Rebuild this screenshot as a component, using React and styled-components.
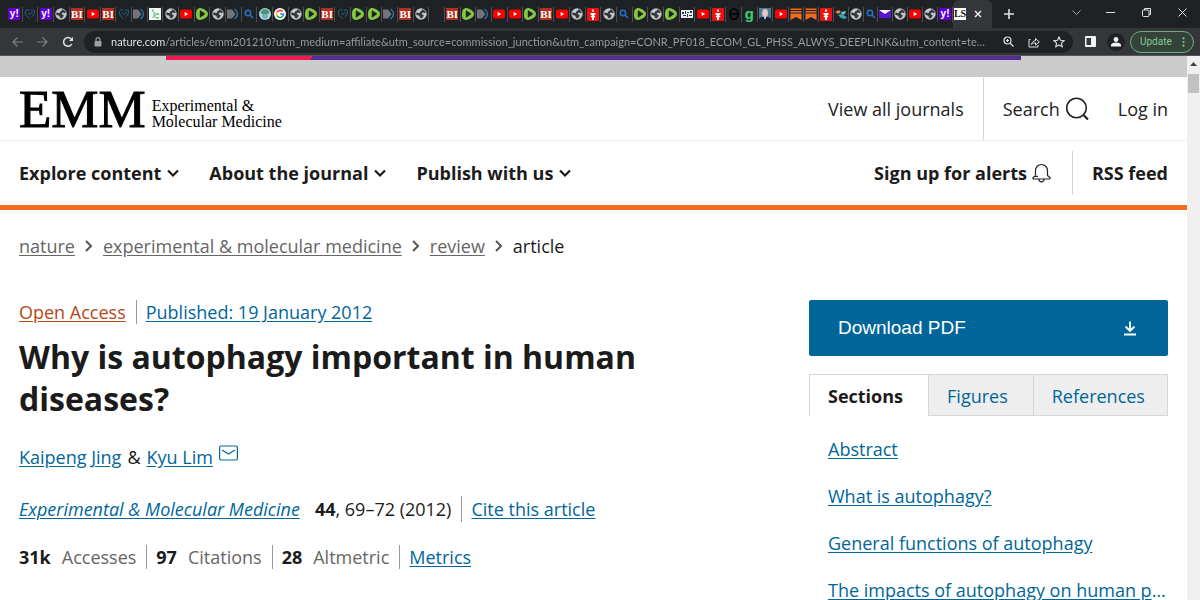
import React from "react";
import styled, { createGlobalStyle } from "styled-components";

const GlobalStyle = createGlobalStyle`
  * {
    box-sizing: border-box;
  }

  body {
    margin: 0;
    background: #ffffff;
    color: #1b1b1b;
    font-family: "Open Sans", "Noto Sans", sans-serif;
    font-size: 18px;
    line-height: 28px;
  }

  button, input {
    font-family: inherit;
    font-size: inherit;
    line-height: inherit;
    color: inherit;
    margin: 0;
    padding: 0;
    border: 0;
    background: none;
  }

  ul, ol {
    list-style: none;
    margin: 0;
    padding: 0;
  }

  svg {
    display: block;
    flex-shrink: 0;
  }
`;

const Window = styled.div`
  display: flex;
  flex-direction: column;
  height: 100vh;
  overflow: hidden;
`;

/* ---------- browser ---------- */

const TabStrip = styled.div`
  display: flex;
  height: 28px;
  padding-left: 7px;
  background: #202124;
  color: #dee1e6;
`;

const Tabs = styled.ul`
  display: flex;
  flex: 1;
  align-items: center;
  min-width: 0;
`;

const Tab = styled.li`
  display: flex;
  flex: ${(props) => (props.$tight ? 19 : 20)} 1 0;
  align-items: center;
  justify-content: center;
  min-width: 0;
  height: 15px;
  border-right: 1px solid #4b4d51;
`;

const ActiveTab = styled.div`
  display: flex;
  align-items: center;
  gap: 8px;
  width: 39px;
  padding-left: 1px;
  border-radius: 6px 6px 0 0;
  background: #35363a;
`;

const WindowButton = styled.button`
  display: flex;
  align-items: center;
  justify-content: center;
  width: ${(props) => props.$width || 36}px;
  color: ${(props) => props.$color || "#dee1e6"};
`;

const WindowButtons = styled.div`
  display: flex;
  height: 25px;
  margin-left: 34px;
`;

const Letter = styled.span`
  display: flex;
  align-items: center;
  justify-content: center;
  width: 12px;
  height: 12px;
  background: ${(props) => props.$bg || "transparent"};
  color: ${(props) => props.$color || "#ffffff"};
  font-family: ${(props) =>
    props.$serif
      ? '"Liberation Serif", serif'
      : '"Liberation Sans", sans-serif'};
  font-size: ${(props) => props.$size || 11}px;
  font-weight: bold;
  line-height: 12px;
`;

const Toolbar = styled.div`
  display: flex;
  align-items: center;
  height: 28px;
  padding: 0 6px 0 5px;
  border-bottom: 1px solid #55565a;
  background: #35363a;
  color: #dee1e6;
`;

const ToolButton = styled.button`
  display: flex;
  align-items: center;
  justify-content: center;
  width: 25px;
  height: 22px;
  color: ${(props) => (props.$dim ? "#7d8084" : "#dee1e6")};
`;

const AddressBar = styled.div`
  display: flex;
  flex: 1;
  align-items: center;
  min-width: 0;
  height: 22px;
  margin: 0 5px 0 4px;
  padding: 0 2px 0 10px;
  border-radius: 11px;
  background: #202124;
`;

const Address = styled.input`
  flex: 1;
  min-width: 0;
  height: 20px;
  margin: 0 6px 0 9px;
  background: linear-gradient(90deg, #f1f3f4 54px, #9aa0a6 54px);
  background-clip: text;
  color: transparent;
  font-family: Lato, sans-serif;
  font-size: 11px;
  text-overflow: ellipsis;
`;

const Profile = styled.button`
  display: flex;
  align-items: center;
  justify-content: center;
  width: 18px;
  height: 18px;
  margin: 0 5px 0 4px;
  border-radius: 50%;
  background: #202124;
`;

const Update = styled.button`
  display: flex;
  align-items: center;
  justify-content: space-between;
  width: 64px;
  height: 22px;
  padding: 0 8px 0 9px;
  border: 1px solid #6fae7f;
  border-radius: 11px;
  background: #34423a;
  color: #81c995;
  font-family: Roboto, sans-serif;
  font-size: 10px;
`;

/* ---------- page ---------- */

const Viewport = styled.div`
  display: flex;
  flex: 1;
  min-height: 0;
`;

const Page = styled.div`
  flex: 1;
  min-width: 0;
  overflow: hidden;
`;

const Scrollbar = styled.div`
  display: flex;
  flex-direction: column;
  align-items: center;
  width: 13px;
  padding-top: 6px;
  gap: 8px;
  background: #f0f0f0;
`;

const Thumb = styled.div`
  width: 11px;
  height: 19px;
  background: #c1c1c1;
`;

const AdSlot = styled.div`
  display: flex;
  justify-content: center;
  height: 21px;
  background: #cccccc;
`;

const Ad = styled.div`
  width: 72%;
  height: 4px;
  background: linear-gradient(120deg, #ef1a53 127px, #552c92 127px);
`;

const TopBar = styled.header`
  display: flex;
  align-items: center;
  justify-content: space-between;
  height: 64px;
  padding: 0 19px;
  border-bottom: 1px solid #ebebeb;
`;

const Brand = styled.a`
  display: flex;
  align-items: flex-end;
  gap: 6px;
  height: 46px;
  color: #000000;
  font-family: "Liberation Serif", serif;
  text-decoration: none;
  -webkit-text-stroke: 1px #000000;
`;

const BrandShort = styled.span`
  font-size: 53px;
  line-height: 46px;
`;

const BrandName = styled.span`
  width: 132px;
  padding-bottom: 2px;
  font-size: 16px;
  line-height: 16px;
  -webkit-text-stroke: 0;
`;

const TopLinks = styled.nav`
  display: flex;
  align-items: center;
  height: 100%;
`;

const TopLink = styled.a`
  display: flex;
  align-items: center;
  gap: 5px;
  height: 100%;
  color: #222222;
  text-decoration: none;
`;

const SearchArea = styled.div`
  display: flex;
  gap: 29px;
  height: 100%;
  margin-left: 19px;
  padding-left: 19px;
  border-left: 1px solid #d5d5d5;
`;

const NavBar = styled.nav`
  display: flex;
  align-items: center;
  justify-content: space-between;
  height: 69px;
  padding: 0 19px;
  border-bottom: 5px solid #f26c21;
`;

const NavGroup = styled.div`
  display: flex;
  align-items: center;
  gap: ${(props) => props.$gap}px;
`;

const NavLink = styled.a`
  display: flex;
  align-items: center;
  gap: 5px;
  color: #1b1b1b;
  font-weight: bold;
  text-decoration: none;
`;

const RssLink = styled(NavLink)`
  height: 44px;
  padding-left: 19px;
  border-left: 1px solid #d5d5d5;
`;

const Breadcrumbs = styled.ol`
  display: flex;
  align-items: center;
  gap: 9px;
  padding: 22px 19px 0;
`;

const Crumb = styled.li`
  display: flex;
  align-items: center;
  gap: 9px;
`;

const CrumbLink = styled.a`
  color: #666666;
  text-underline-offset: 2px;
`;

const Columns = styled.div`
  display: flex;
  gap: 48px;
  padding: 39px 19px 0;
`;

const Article = styled.main`
  flex: 1;
  min-width: 0;
`;

const Meta = styled.ul`
  display: flex;
  align-items: center;
  height: 26px;
`;

const MetaItem = styled.li`
  display: flex;
  align-items: center;
  gap: 11px;
  height: 24px;
  padding-right: 10px;
  color: #666666;

  & + & {
    padding-left: 9px;
    border-left: 1px solid #999999;
  }
`;

const TextLink = styled.a`
  color: ${(props) => (props.$open ? "#b74616" : "#006699")};
  font-style: ${(props) => (props.$italic ? "italic" : "normal")};
  text-underline-offset: 2px;
`;

const Title = styled.h1`
  margin: 11px 0 0;
  font-size: 32px;
  font-weight: bold;
  line-height: 42px;
`;

const Authors = styled.p`
  display: flex;
  gap: 6px;
  margin: 23px 0 0;
`;

const Citation = styled.div`
  display: flex;
  align-items: center;
  margin: 24px 0 21px;
`;

const Issue = styled.span`
  margin: 0 10px 0 15px;
`;

const Cite = styled.span`
  height: 26px;
  padding-left: 9px;
  border-left: 1px solid #999999;
  line-height: 26px;
`;

const Count = styled.strong`
  color: #1b1b1b;
`;

const Sidebar = styled.aside`
  width: 359px;
  padding-top: 1px;
`;

const Download = styled.button`
  display: flex;
  align-items: center;
  justify-content: space-between;
  width: 100%;
  height: 56px;
  padding: 0 30px 0 29px;
  border-radius: 2px;
  background: #006699;
  color: #ffffff;
  font-family: "Liberation Sans", sans-serif;
  font-size: 19px;
`;

const SectionTabs = styled.div`
  display: flex;
  height: 42px;
  margin-top: 18px;
  border: solid #d5d5d5;
  border-width: 1px 1px 0;
`;

const SectionTab = styled.button`
  flex: ${(props) => props.$grow || "0 0 auto"};
  min-width: 0;
  padding: 2px ${(props) => (props.$grow ? 0 : 25)}px 0 18px;
  border-left: ${(props) => (props.$active ? 0 : 1)}px solid #d5d5d5;
  border-bottom: 1px solid ${(props) => (props.$active ? "#ffffff" : "#d5d5d5")};
  background: ${(props) => (props.$active ? "#ffffff" : "#eeeeee")};
  color: ${(props) => (props.$active ? "#1b1b1b" : "#006699")};
  font-weight: ${(props) => (props.$active ? "bold" : "normal")};
  text-align: left;
`;

const SectionList = styled.ul`
  padding: 19px 0 0 19px;
`;

const SectionItem = styled.li`
  height: 47px;
  overflow: hidden;
  color: #006699;
  text-overflow: ellipsis;
  white-space: nowrap;
`;

/* ---------- icons ---------- */

const Globe = () => (
  <svg width="12" height="12" viewBox="0 0 12 12">
    <circle cx="6" cy="6" r="5.7" fill="#c4c7cb" />
    <path
      d="M1.4 4.5c1.5 0 2 .7 3 .5s.4-1.800 1.600-2S7.400 1.700 7 1.300C9 1.500 10.500 3 10.700 5c-1-.3-1.700.2-2.200-.4S6.500 5 6.800 6s2 .6 1.900 1.700-1.200 1-1.500 2.500C5 10.500 4.500 9.500 4.700 8.500S3 7.600 1.300 6.700z"
      fill="#35363a"
    />
  </svg>
);

const YouTube = () => (
  <svg width="12" height="12" viewBox="0 0 12 12">
    <rect x="0" y="1.500" width="12" height="9" rx="2" fill="#ff0000" />
    <path d="M4.700 4v4l3.500-2z" fill="#fff" />
  </svg>
);

const Rumble = () => (
  <svg width="12" height="12" viewBox="0 0 12 12">
    <path
      d="M3 .2c2.200-.9 6.500 1.300 8.300 3.500.9 1.400.9 3.200 0 4.600-1.800 2.200-5.300 4-8 3.600C.5 11.300 0 9.500 0 6 .1 3 .6 1 3 .2z"
      fill="#85c742"
    />
    <path d="M3.800 3.200c0-.6.500-.8 1-.5l3.800 2.600c.5.400.5 1 0 1.300L4.800 9.300c-.5.300-1 .1-1-.5z" fill="#202124" />
  </svg>
);

const Heart = () => (
  <svg width="12" height="12" viewBox="0 0 12 12" fill="none" stroke="#1c6e8e">
    <path d="M5.500 10.500C3 9 1.500 7 1.300 4.500 1.200 2 3.500 1 5.500 2.300M7 2.300c2-1.300 3.800-.3 3.500 2S8.800 8 7.500 9M4 5l2 1.500L8.500 4" />
  </svg>
);

const Doc = () => (
  <svg width="13" height="12" viewBox="0 0 13 12">
    <path d="M0 1.500h5L8.500 6 5 10.500H0z" fill="#71757b" />
    <path d="M7.500 1c2 1.500 3 3 3 5s-1 3.500-3 5" fill="none" stroke="#2878b8" strokeWidth="1.400" />
  </svg>
);

const Lens = () => (
  <svg width="12" height="12" viewBox="0 0 12 12" fill="none" stroke="#2374c6">
    <circle cx="5" cy="5" r="2.700" strokeWidth="1.500" />
    <path d="M7 7l3 3" strokeWidth="1.700" />
  </svg>
);

const Torch = () => (
  <svg width="12" height="13" viewBox="0 0 12 13">
    <rect width="12" height="13" rx="1" fill="#ee1111" />
    <path d="M6 1c1.300 1.300 1.200 2.300 0 3.200C4.800 3.300 4.700 2.300 6 1zM3.500 5h5v1.500L7 7.700V8h1.200v1.200H7V12H5V9.200H3.800V8H5v-.3L3.500 6.500z" fill="#fff" />
  </svg>
);

const Substack = () => (
  <svg width="12" height="12" viewBox="0 0 12 12" fill="#f06c20">
    <path d="M.5.500h11V2H.5zM.5 3h11v1.500H.5zM.5 5.500h11V12L6 9l-5.500 3z" />
  </svg>
);

const Google = () => (
  <svg width="12" height="12" viewBox="0 0 12 12">
    <circle cx="6" cy="6" r="6" fill="#fff" />
    <g fill="none" strokeWidth="1.700">
      <path d="M3 4.300A3.500 3.500 0 0 1 8.600 3.500" stroke="#ea4335" />
      <path d="M3 4.300a3.500 3.500 0 0 0 0 3.400" stroke="#fbbc05" />
      <path d="M3 7.700a3.500 3.500 0 0 0 5.400.9" stroke="#34a853" />
      <path d="M8.400 8.600A3.500 3.500 0 0 0 9.500 6H6" stroke="#4285f4" />
    </g>
  </svg>
);

const Tree = () => (
  <svg width="12" height="12" viewBox="0 0 12 12">
    <circle cx="6" cy="6" r="6" fill="#a9d9e4" />
    <path d="M1.500 5C2 2 4 1 6 1s4 1 4.500 4L9 6H3z" fill="#48a46b" />
    <path d="M4.200 3v7M6 2v9.500M7.800 3v7" stroke="#527a83" strokeWidth=".9" />
  </svg>
);

const Network = () => (
  <svg width="12" height="12" viewBox="0 0 12 12">
    <rect width="12" height="12" fill="#f2f7f4" />
    <path d="M3 2l2 3 4 1-4 2-2 2M5 5v4l4 1" fill="none" stroke="#74b99f" />
    <path d="M3 1.500h1.500V3H3zM8.500 5.500H10V7H8.500zM8 9h2v1.500H8z" fill="#6ac05f" />
  </svg>
);

const Pixels = () => (
  <svg width="12" height="12" viewBox="0 0 12 12">
    <rect y="2" width="12" height="8" fill="#e7edf3" />
    <path d="M1 4h2v2H1zM4 3h1v3H4zM6 4h2v1H6zM9 3h2v2H9zM2 7h3v1H2zM6 6h1v3H6zM8 7h3v1H8z" fill="#25384e" />
  </svg>
);

const Portrait = () => (
  <svg width="12" height="12" viewBox="0 0 12 12">
    <rect width="12" height="12" fill="#50789b" />
    <path d="M0 12c0-3 3-3 6-3s6 0 6 3z" fill="#16202f" />
    <ellipse cx="6" cy="5" rx="3" ry="4" fill="#e4c6bd" />
    <path d="M5 9h2l-1 3z" fill="#fff" />
  </svg>
);

const Blocks = () => (
  <svg width="12" height="12" viewBox="0 0 12 12">
    <path d="M0 4l4-2 2 2-3 2z" fill="#ef7f38" />
    <path d="M6 4l5-1-1 3-3 1z" fill="#5fc5d6" />
    <path d="M3 7l3-1 6 3-2 2-4-1z" fill="#38a6c1" />
  </svg>
);

const Mail = () => (
  <svg width="12" height="12" viewBox="0 0 12 12">
    <rect y="2" width="12" height="8" fill="#5b13d1" />
    <path d="M0 2h12L6 6z" fill="#fff" />
  </svg>
);

const Theta = () => (
  <svg width="12" height="12" viewBox="0 0 12 12" fill="none" stroke="#000000">
    <ellipse cx="6" cy="6" rx="4" ry="5.200" strokeWidth="1.600" />
    <path d="M2.500 6h7" strokeWidth="1.400" />
  </svg>
);

const Chevron = () => (
  <svg width="14" height="9" viewBox="0 0 14 9" fill="none" stroke="currentColor" strokeWidth="2.200">
    <path d="M2 1.500l5 5 5-5" />
  </svg>
);

const CrumbArrow = () => (
  <svg width="10" height="12" viewBox="0 0 10 12" fill="none" stroke="#555555" strokeWidth="2">
    <path d="M2 1l5 5-5 5" />
  </svg>
);

const favicons = {
  y: (
    <Letter $bg="#5f01d1" $size={10}>
      y!
    </Letter>
  ),
  h: <Heart />,
  w: <Globe />,
  b: (
    <Letter $bg="#b3301f" $serif>
      BI
    </Letter>
  ),
  t: <YouTube />,
  d: <Doc />,
  n: <Network />,
  r: <Rumble />,
  s: <Lens />,
  e: <Tree />,
  g: <Google />,
  x: <Letter />,
  c: <Torch />,
  p: <Pixels />,
  o: <Theta />,
  G: (
    <Letter $color="#30d575" $size={15}>
      g
    </Letter>
  ),
  f: <Portrait />,
  u: <Substack />,
  k: <Blocks />,
  m: <Mail />,
};

const openTabs = "yhywbtbhdnwtrwdsegwrbhrrdbwxbrdttrbtwcwsrwrptcoGftuuckwsmwtwy";

const sections = [
  "Abstract",
  "What is autophagy?",
  "General functions of autophagy",
  "The impacts of autophagy on human pathology",
];

function Browser() {
  return (
    <>
      <TabStrip>
        <Tabs>
          {openTabs.split("").map((tab, i) => (
            <Tab key={i} $tight={i > 49}>
              {favicons[tab]}
            </Tab>
          ))}
        </Tabs>
        <ActiveTab>
          <Letter $bg="#ffffff" $color="#111111" $size={10} $serif>
            LS
          </Letter>
          <svg width="8" height="8" viewBox="0 0 8 8" stroke="#f1f3f4" strokeWidth="1.400">
            <path d="M1 1l6 6M7 1L1 7" />
          </svg>
        </ActiveTab>
        <WindowButton $width={34} aria-label="New tab">
          <svg width="10" height="10" viewBox="0 0 10 10" stroke="currentColor" strokeWidth="1.600">
            <path d="M5 0v10M0 5h10" />
          </svg>
        </WindowButton>
        <WindowButtons>
          <WindowButton $width={32} $color="#a0a2a6" aria-label="Search tabs">
            <svg width="9" height="6" viewBox="0 0 9 6" fill="none" stroke="currentColor">
              <path d="M.5.500l4 4 4-4" />
            </svg>
          </WindowButton>
          <WindowButton aria-label="Minimize">
            <svg width="9" height="9" viewBox="0 0 9 9" stroke="currentColor">
              <path d="M0 4.500h9" />
            </svg>
          </WindowButton>
          <WindowButton aria-label="Restore">
            <svg width="9" height="9" viewBox="0 0 9 9" fill="none" stroke="currentColor">
              <rect x=".5" y="2" width="6.500" height="6.500" rx="1" />
              <path d="M2.500 2V.500h6v6H7" />
            </svg>
          </WindowButton>
          <WindowButton aria-label="Close">
            <svg width="9" height="9" viewBox="0 0 9 9" stroke="currentColor">
              <path d="M.5.500l8 8M8.500.500l-8 8" />
            </svg>
          </WindowButton>
        </WindowButtons>
      </TabStrip>
      <Toolbar>
        <ToolButton $dim aria-label="Back">
          <svg width="11" height="10" viewBox="0 0 11 10" fill="none" stroke="currentColor" strokeWidth="1.200">
            <path d="M11 5H1M5.500.500L1 5l4.500 4.500" />
          </svg>
        </ToolButton>
        <ToolButton $dim aria-label="Forward">
          <svg width="11" height="10" viewBox="0 0 11 10" fill="none" stroke="currentColor" strokeWidth="1.200">
            <path d="M0 5h10M5.500.500L10 5 5.500 9.500" />
          </svg>
        </ToolButton>
        <ToolButton aria-label="Reload">
          <svg width="12" height="12" viewBox="0 0 12 12" fill="none" stroke="currentColor" strokeWidth="1.500">
            <path d="M9.800 8.200A4.400 4.400 0 1 1 9.300 3L10.700 4.600" />
            <path d="M11 1v4H7z" fill="currentColor" stroke="none" />
          </svg>
        </ToolButton>
        <AddressBar>
          <svg width="8" height="10" viewBox="0 0 8 10">
            <rect x=".500" y="4" width="7" height="5.500" rx="1" fill="#9aa0a6" />
            <path d="M2 4V2.700a2 2 0 0 1 4 0V4" fill="none" stroke="#9aa0a6" strokeWidth="1.200" />
          </svg>
          <Address
            aria-label="Address"
            readOnly
            value="nature.com/articles/emm201210?utm_medium=affiliate&utm_source=commission_junction&utm_campaign=CONR_PF018_ECOM_GL_PHSS_ALWYS_DEEPLINK&utm_content=textlink&utm_term=PID100090071"
          />
          <ToolButton aria-label="Zoom">
            <svg width="11" height="11" viewBox="0 0 11 11" fill="none" stroke="currentColor" strokeWidth="1.200">
              <circle cx="4.500" cy="4.500" r="3.500" />
              <path d="M7 7l3.500 3.500M4.500 3v3M3 4.500h3" />
            </svg>
          </ToolButton>
          <ToolButton aria-label="Share">
            <svg width="12" height="12" viewBox="0 0 12 12" fill="none" stroke="currentColor">
              <path d="M2.500 3.500H1V11h9V9" />
              <path d="M3.500 8.500C4 6 5.500 4.700 7.500 4.700V2.500L11.300 6 7.500 9V6.800C6 6.800 4.600 7.300 3.500 8.500z" />
            </svg>
          </ToolButton>
          <ToolButton aria-label="Bookmark">
            <svg width="12" height="12" viewBox="0 0 12 12" fill="none" stroke="currentColor" strokeWidth="1.100">
              <path d="M6 1l1.500 3.300 3.600.4-2.700 2.400.8 3.600L6 8.900l-3.200 1.800.8-3.600L.9 4.700l3.600-.4z" />
            </svg>
          </ToolButton>
        </AddressBar>
        <ToolButton aria-label="Side panel">
          <svg width="11" height="11" viewBox="0 0 11 11">
            <rect width="11" height="11" rx="1" fill="#f1f3f4" />
            <rect x="1.500" y="2" width="4.500" height="7" fill="#35363a" />
          </svg>
        </ToolButton>
        <Profile aria-label="Profile">
          <svg width="10" height="10" viewBox="0 0 10 10" fill="#f1f3f4">
            <circle cx="5" cy="2.500" r="2.400" />
            <path d="M0 9.500V8c0-1.700 3-2.500 5-2.500s5 .8 5 2.500v1.500z" />
          </svg>
        </Profile>
        <Update>
          Update
          <svg width="3" height="10" viewBox="0 0 3 10" fill="currentColor">
            <circle cx="1.500" cy="1.300" r="1.100" />
            <circle cx="1.500" cy="5" r="1.100" />
            <circle cx="1.500" cy="8.700" r="1.100" />
          </svg>
        </Update>
      </Toolbar>
    </>
  );
}

function Header() {
  return (
    <>
      <TopBar>
        <Brand href="#home">
          <BrandShort>EMM</BrandShort>
          <BrandName>Experimental & Molecular Medicine</BrandName>
        </Brand>
        <TopLinks>
          <TopLink href="#journals">View all journals</TopLink>
          <SearchArea>
            <TopLink href="#search">
              Search
              <svg width="24" height="24" viewBox="0 0 24 24" fill="none" stroke="#222222">
                <circle cx="11.500" cy="11" r="9.800" strokeWidth="1.600" />
                <path d="M18.500 18l4.500 4.500" strokeWidth="2.200" />
              </svg>
            </TopLink>
            <TopLink href="#login">Log in</TopLink>
          </SearchArea>
        </TopLinks>
      </TopBar>
      <NavBar>
        <NavGroup $gap={29}>
          <NavLink href="#explore">
            Explore content <Chevron />
          </NavLink>
          <NavLink href="#about">
            About the journal <Chevron />
          </NavLink>
          <NavLink href="#publish">
            Publish with us <Chevron />
          </NavLink>
        </NavGroup>
        <NavGroup $gap={21}>
          <NavLink href="#alerts">
            Sign up for alerts
            <svg width="19" height="20" viewBox="0 0 19 20" fill="none" stroke="#222222" strokeWidth="1.200">
              <path d="M3.500 12.500V7.500a6 6 0 0 1 12 0v5l2.300 2c.6.600.3 1.500-.5 1.500H1.700c-.8 0-1.100-.9-.5-1.500l1.300-1.100H6" />
              <path d="M6.800 16c.2 1.800 1.300 2.800 2.700 2.800s2.500-1 2.700-2.800" />
            </svg>
          </NavLink>
          <RssLink href="#rss">RSS feed</RssLink>
        </NavGroup>
      </NavBar>
    </>
  );
}

function App() {
  return (
    <Window>
      <GlobalStyle />
      <Browser />
      <Viewport>
        <Page>
          <AdSlot>
            <Ad />
          </AdSlot>
          <Header />
          <Breadcrumbs>
            {["nature", "experimental & molecular medicine", "review"].map(
              (name) => (
                <Crumb key={name}>
                  <CrumbLink href="#crumb">{name}</CrumbLink>
                  <CrumbArrow />
                </Crumb>
              )
            )}
            <Crumb>article</Crumb>
          </Breadcrumbs>
          <Columns>
            <Article>
              <Meta>
                <MetaItem>
                  <TextLink href="#access" $open>
                    Open Access
                  </TextLink>
                </MetaItem>
                <MetaItem>
                  <TextLink href="#published">
                    Published: 19 January 2012
                  </TextLink>
                </MetaItem>
              </Meta>
              <Title>Why is autophagy important in human diseases?</Title>
              <Authors>
                <TextLink href="#jing">Kaipeng Jing</TextLink>
                <span>&</span>
                <TextLink href="#lim">Kyu Lim</TextLink>
                <svg width="19" height="20" viewBox="0 0 19 20" fill="none" stroke="#006699" strokeWidth="1.200">
                  <rect x=".600" y="3" width="17.800" height="14" rx="1.500" />
                  <path d="M3 7l6.500 4L16 7" />
                </svg>
              </Authors>
              <Citation>
                <TextLink href="#journal" $italic>
                  Experimental & Molecular Medicine
                </TextLink>
                <Issue>
                  <Count>44</Count>, 69–72 (2012)
                </Issue>
                <Cite>
                  <TextLink href="#cite">Cite this article</TextLink>
                </Cite>
              </Citation>
              <Meta>
                <MetaItem>
                  <Count>31k</Count> Accesses
                </MetaItem>
                <MetaItem>
                  <Count>97</Count> Citations
                </MetaItem>
                <MetaItem>
                  <Count>28</Count> Altmetric
                </MetaItem>
                <MetaItem>
                  <TextLink href="#metrics">Metrics</TextLink>
                </MetaItem>
              </Meta>
            </Article>
            <Sidebar>
              <Download>
                Download PDF
                <svg width="16" height="16" viewBox="0 0 16 16" fill="none" stroke="#ffffff" strokeWidth="1.800">
                  <path d="M8 1.500v9M3.500 6.500L8 11l4.500-4.500M2 14.500h12" />
                </svg>
              </Download>
              <SectionTabs>
                <SectionTab $active>Sections</SectionTab>
                <SectionTab>Figures</SectionTab>
                <SectionTab $grow="1">References</SectionTab>
              </SectionTabs>
              <SectionList>
                {sections.map((section) => (
                  <SectionItem key={section}>
                    <TextLink href="#section">{section}</TextLink>
                  </SectionItem>
                ))}
              </SectionList>
            </Sidebar>
          </Columns>
        </Page>
        <Scrollbar>
          <svg width="7" height="4" viewBox="0 0 7 4" fill="#444444">
            <path d="M0 4l3.500-4L7 4z" />
          </svg>
          <Thumb />
        </Scrollbar>
      </Viewport>
    </Window>
  );
}

export default App;
